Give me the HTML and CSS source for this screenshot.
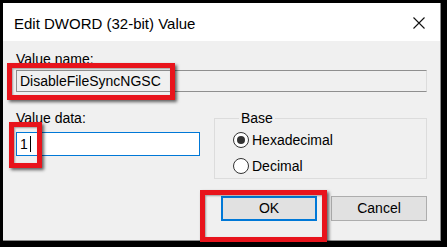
FILE: index.html
```
<!DOCTYPE html>
<html lang="en">
<head>
	<meta charset="UTF-8">
	<title>Edit DWORD (32-bit) Value</title>
	<link rel="stylesheet" href="styles.css">
</head>
<body>
	<div class="dialog">
		<div class="titlebar">
			<span class="title">Edit DWORD (32-bit) Value</span>
			<svg class="close" width="12" height="12" viewBox="0 0 12 12">
				<path d="M0.5 0.5 L11.5 11.5 M11.5 0.5 L0.5 11.5" stroke="#111" stroke-width="1.1" fill="none"/>
			</svg>
		</div>
		<div class="content">
			<div class="label">Value name:</div>
			<div class="field readonly">DisableFileSyncNGSC</div>
			<div class="row">
				<div class="data-col">
					<div class="label">Value data:</div>
					<div class="field active">1<span class="caret"></span></div>
				</div>
				<fieldset class="base">
					<legend>Base</legend>
					<div class="radio-row"><span class="radio checked"></span>Hexadecimal</div>
					<div class="radio-row"><span class="radio"></span>Decimal</div>
				</fieldset>
			</div>
			<div class="buttons">
				<div class="btn default">OK</div>
				<div class="btn">Cancel</div>
			</div>
		</div>
		<!-- red annotation boxes -->
		<div class="mark mark-name"></div>
		<div class="mark mark-data"></div>
		<div class="mark mark-ok"></div>
	</div>
</body>
</html>
```
FILE: styles.css
```
html, body {
	margin: 0;
	padding: 0;
	background: #000;
}
body {
	width: 447px;
	height: 247px;
	overflow: hidden;
	font-family: "Liberation Sans", Arial, sans-serif;
	font-size: 14px;
	color: #000;
}
.dialog {
	position: relative;
	margin: 3px 0 0 3px;
	width: 437px;
	height: 237px;
	border: 1px solid #8a8a8a;
	border-top: none;
	border-left: none;
	background: #f0f0f0;
}
.titlebar {
	height: 38px;
	background: #fff;
	display: flex;
	align-items: center;
	justify-content: space-between;
	padding: 0 15px 0 11px;
}
.title {
	font-size: 15px;
	margin-top: 2px;
}
.close {
	display: block;
	margin-top: 1px;
}
.content {
	padding: 10px 13px 0 13px;
	line-height: 16px;
}
.field {
	box-sizing: border-box;
	margin-top: 3px;
	height: 22px;
	border: 1px solid #7a7a7a;
	padding: 0 3px;
	line-height: 20px;
}
.readonly {
	background: #f0f0f0;
	border-color: #8f8f8f #dcdcdc #8f8f8f #8f8f8f;
}
.row {
	display: flex;
	gap: 14px;
	margin-top: 18px;
}
.data-col {
	width: 184px;
}
.active {
	margin-top: 6px;
	height: 24px;
	line-height: 22px;
	background: #fff;
	border-color: #0078d7;
	display: flex;
	align-items: center;
}
.caret {
	display: inline-block;
	width: 1px;
	height: 16px;
	background: #000;
	margin-left: 2px;
}
.base {
	flex: 1;
	margin: 0;
	padding: 1px 0 0 18px;
	border: 1px solid #dcdcdc;
	height: 69px;
	box-sizing: border-box;
	min-width: 0;
}
.base legend {
	padding: 0 2px;
	margin-left: 6px;
}
.radio-row {
	display: flex;
	align-items: center;
	height: 26px;
	gap: 3px;
}
.radio {
	box-sizing: border-box;
	width: 16px;
	height: 16px;
	border: 1px solid #333;
	border-radius: 50%;
	background: #fff;
	display: flex;
	align-items: center;
	justify-content: center;
}
.radio.checked::after {
	content: "";
	width: 8px;
	height: 8px;
	border-radius: 50%;
	background: #333;
}
.buttons {
	display: flex;
	justify-content: flex-end;
	gap: 14px;
	margin-top: 17px;
}
.btn {
	box-sizing: border-box;
	width: 96px;
	height: 25px;
	line-height: 23px;
	text-align: center;
	background: #e1e1e1;
	border: 1px solid #adadad;
}
.btn.default {
	border: 2px solid #0078d7;
	line-height: 21px;
}
.mark {
	position: absolute;
	box-sizing: border-box;
	border: 5px solid #e8141c;
	box-shadow: 2px 2px 3px rgba(0, 0, 0, 0.6), inset 1px 1px 2px rgba(0, 0, 0, 0.35);
}
.mark-name {
	left: 4px;
	top: 60px;
	width: 168px;
	height: 37px;
}
.mark-data {
	left: 6px;
	top: 119px;
	width: 33px;
	height: 46px;
}
.mark-ok {
	left: 197px;
	top: 187px;
	width: 127px;
	height: 52px;
}
```
